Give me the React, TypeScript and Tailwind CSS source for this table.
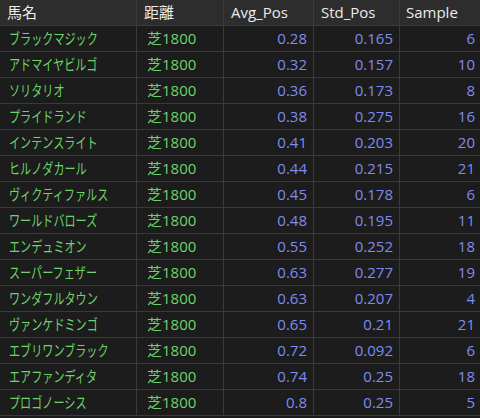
import React from "react";

const rows: [string, number, number, number][] = [
  ["ブラックマジック", 0.28, 0.165, 6],
  ["アドマイヤビルゴ", 0.32, 0.157, 10],
  ["ソリタリオ", 0.36, 0.173, 8],
  ["プライドランド", 0.38, 0.275, 16],
  ["インテンスライト", 0.41, 0.203, 20],
  ["ヒルノダカール", 0.44, 0.215, 21],
  ["ヴィクティファルス", 0.45, 0.178, 6],
  ["ワールドバローズ", 0.48, 0.195, 11],
  ["エンデュミオン", 0.55, 0.252, 18],
  ["スーパーフェザー", 0.63, 0.277, 19],
  ["ワンダフルタウン", 0.63, 0.207, 4],
  ["ヴァンケドミンゴ", 0.65, 0.21, 21],
  ["エブリワンブラック", 0.72, 0.092, 6],
  ["エアファンディタ", 0.74, 0.25, 18],
  ["プロゴノーシス", 0.8, 0.25, 5],
];

const latin = { fontFamily: '"Open Sans", "Noto Sans CJK JP", sans-serif' };
const cjk = { fontFamily: '"Noto Sans CJK JP", sans-serif' };

export default function App() {
  return (
    <div className="w-[480px] h-[418px] bg-[#1c1c1c] overflow-hidden text-[15px]" style={latin}>
      <div className="grid grid-cols-[136px_86px_89px_85px_80px] auto-rows-[25px] gap-px bg-[#3a3a3a] border-b border-[#3a3a3a]">
        <div className="bg-[#2d2d2d] text-[#ececec] flex items-center pl-[7px]" style={cjk}>
          馬名
        </div>
        <div className="bg-[#2d2d2d] text-[#ececec] flex items-center pl-[7px]" style={cjk}>
          距離
        </div>
        <div className="bg-[#2d2d2d] text-[#ececec] flex items-center pl-[7px]">Avg_Pos</div>
        <div className="bg-[#2d2d2d] text-[#ececec] flex items-center pl-[7px]">Std_Pos</div>
        <div className="bg-[#2d2d2d] text-[#ececec] flex items-center pl-[6px]">Sample</div>
        {rows.map(([name, avg, std, n]) => (
          <React.Fragment key={name}>
            <div className="bg-[#1c1c1c] text-[#6bd46b] flex items-center pl-[9px] whitespace-nowrap overflow-hidden" style={cjk}>
              <span className="inline-block scale-x-[0.74] origin-left">{name}</span>
            </div>
            <div className="bg-[#1c1c1c] text-[#6bd46b] flex items-center pl-[10px]">
              <span style={cjk}>芝</span>
              <span>1800</span>
            </div>
            <div className="bg-[#1c1c1c] text-[#7d8cf0] flex items-center justify-end pr-[6px]">{avg}</div>
            <div className="bg-[#1c1c1c] text-[#7d8cf0] flex items-center justify-end pr-[6px]">{std}</div>
            <div className="bg-[#1c1c1c] text-[#7d8cf0] flex items-center justify-end pr-[5px]">{n}</div>
          </React.Fragment>
        ))}
      </div>
    </div>
  );
}
